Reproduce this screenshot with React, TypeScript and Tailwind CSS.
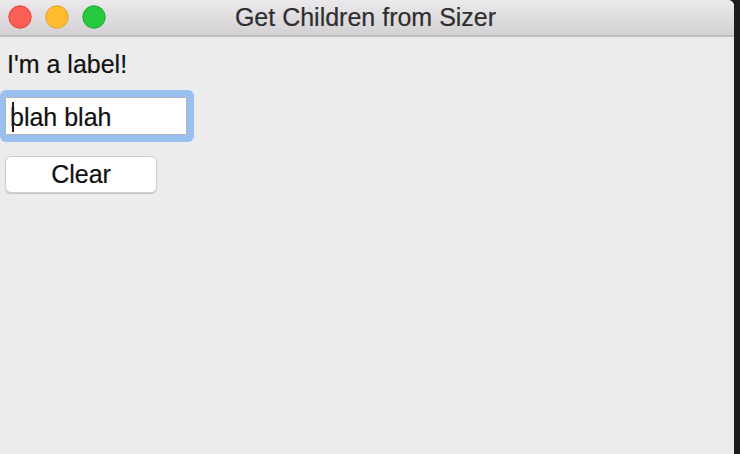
const TrafficLight = ({ fill, stroke }: { fill: string; stroke: string }) => (
  <svg width="24" height="24" viewBox="0 0 24 24">
    <circle cx="12" cy="12" r="11.2" fill={fill} stroke={stroke} strokeWidth="1" />
  </svg>
);

const App = () => {
  return (
    <div
      className="flex h-[454px] w-[740px] overflow-hidden bg-[#1c1c1a]"
      style={{ fontFamily: '"Liberation Sans", Arial, sans-serif' }}
    >
      <div className="flex h-full w-[734px] flex-col overflow-hidden rounded-tr-[6px] bg-[#ececec]">
        {/* title bar */}
        <div className="relative flex h-[37px] shrink-0 items-center justify-center border-b-2 border-[#c0bec0] bg-gradient-to-b from-[#ebe9eb] to-[#d3d1d3]">
          <div className="absolute left-[8px] top-[5px] flex gap-[13px]">
            <TrafficLight fill="#fd5f57" stroke="#e2463f" />
            <TrafficLight fill="#febc2e" stroke="#e0a028" />
            <TrafficLight fill="#28c840" stroke="#1eac2e" />
          </div>
          <span className="-ml-[3px] text-[25px] leading-[25px] text-[#2e2e2e] [-webkit-text-stroke:0.2px_#2e2e2e]">
            Get Children from Sizer
          </span>
        </div>

        {/* content */}
        <div className="flex flex-col items-start [-webkit-text-stroke:0.2px_#111]">
          <p className="ml-[7px] mt-[15px] text-[25px] leading-[25px] text-[#111]">I'm a label!</p>

          <div className="mt-[13px] rounded-[6px] bg-[#98c1f1] pb-[7px] pl-[5px] pr-[7px] pt-[7px]">
            <div className="relative flex h-[38px] w-[182px] items-center border border-[#b4b4b4] bg-white pl-[4px] pt-[2px]">
              <span className="text-[25px] leading-[25px] text-[#111]">blah blah</span>
              <span className="absolute left-[6px] top-[4px] h-[30px] w-[2px] bg-[#2a1a1a]" />
            </div>
          </div>

          <button
            type="button"
            className="ml-[5px] mt-[14px] flex h-[37px] w-[152px] items-center justify-center rounded-[6px] border border-[#cfcfcf] bg-white text-[25px] leading-[25px] text-[#111] shadow-[0_1px_1px_rgba(0,0,0,0.18)]"
          >
            Clear
          </button>
        </div>
      </div>
    </div>
  );
};

export default App;
